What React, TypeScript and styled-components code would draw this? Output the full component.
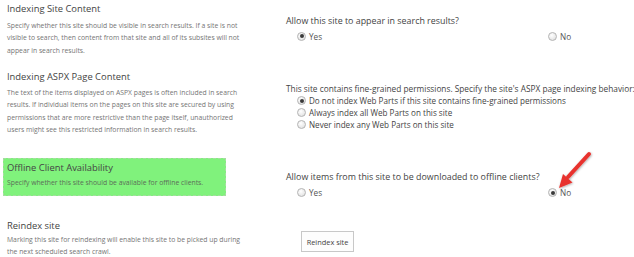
import React from "react";
import styled, { createGlobalStyle } from "styled-components";

const GlobalStyle = createGlobalStyle`
  html, body {
    margin: 0;
    padding: 0;
    background: #ffffff;
  }
  body {
    font-family: "Open Sans", "Noto Sans", sans-serif;
    width: 634px;
    height: 257px;
    overflow: hidden;
  }
`;

function Page() {
  return (
    <Wrapper>
      <Row top={2}>
        <Left>
          <Heading>Indexing Site Content</Heading>
          <Description gap={4.5}>
            Specify whether this site should be visible in search results. If a site is not
            <br />
            visible to search, then content from that site and all of its subsites will not
            <br />
            appear in search results.
          </Description>
        </Left>
        <Right pad={11.5}>
          <Question>Allow this site to appear in search results?</Question>
          <Choices>
            <Option>
              <Radio checked />
              Yes
            </Option>
            <Option>
              <Radio />
              No
            </Option>
          </Choices>
        </Right>
      </Row>

      <Row top={12.5}>
        <Left>
          <Heading>Indexing ASPX Page Content</Heading>
          <Description gap={4}>
            The text of the items displayed on ASPX pages is often included in search
            <br />
            results. If individual items on the pages on this site are secured by using
            <br />
            permissions that are more restrictive than the page itself, unauthorized
            <br />
            users might see this restricted information in search results.
          </Description>
        </Left>
        <Right pad={12}>
          <Question condensed>
            This site contains fine-grained permissions. Specify the site's ASPX page indexing behavior:
          </Question>
          <List>
            <ListItem>
              <Radio checked />
              Do not index Web Parts if this site contains fine-grained permissions
            </ListItem>
            <ListItem>
              <Radio />
              Always index all Web Parts on this site
            </ListItem>
            <ListItem>
              <Radio />
              Never index any Web Parts on this site
            </ListItem>
          </List>
        </Right>
      </Row>

      <Row top={21}>
        <Left>
          <Highlight>
            <Heading>Offline Client Availability</Heading>
            <Description gap={2.5}>
              Specify whether this site should be available for offline clients.
            </Description>
          </Highlight>
        </Left>
        <Right pad={12.5}>
          <Question>Allow items from this site to be downloaded to offline clients?</Question>
          <Choices>
            <Option>
              <Radio />
              Yes
            </Option>
            <Option>
              <Radio checked />
              No
            </Option>
          </Choices>
        </Right>
      </Row>

      <Row top={19.5}>
        <Left>
          <Heading>Reindex site</Heading>
          <Description gap={2}>
            Marking this site for reindexing will enable this site to be picked up during
            <br />
            the next scheduled search crawl.
          </Description>
        </Left>
        <Right pad={9}>
          <Button>Reindex site</Button>
        </Right>
      </Row>

      <Arrow width="44" height="46" viewBox="0 0 44 46">
        <defs>
          <filter id="shadow" x="-30%" y="-30%" width="160%" height="160%">
            <feDropShadow dx="0.6" dy="0.8" stdDeviation="0.8" floodColor="#000" floodOpacity="0.35" />
          </filter>
        </defs>
        <g filter="url(#shadow)">
          <line x1="36" y1="4" x2="15" y2="27" stroke="#e8322d" strokeWidth="4" strokeLinecap="round" />
          <polygon points="6,38 19.5,32.5 10,24" fill="#e8322d" />
        </g>
      </Arrow>
    </Wrapper>
  );
}

export default function App() {
  return (
    <>
      <GlobalStyle />
      <Page />
    </>
  );
}

const Wrapper = styled.div`
  position: relative;
  width: 634px;
  height: 257px;
  padding-left: 7px;
  box-sizing: border-box;
`;

const Row = styled.div<{ top: number }>`
  display: grid;
  grid-template-columns: 279px 1fr;
  margin-top: ${(p) => p.top}px;
`;

const Left = styled.div``;

const Right = styled.div<{ pad: number }>`
  padding-top: ${(p) => p.pad}px;
`;

const Heading = styled.div`
  font-size: 9.4px;
  line-height: 13px;
  color: #444444;
  white-space: nowrap;
`;

const Description = styled.div<{ gap: number }>`
  margin-top: ${(p) => p.gap}px;
  font-size: 6.8px;
  line-height: 12.5px;
  color: #757575;
  white-space: nowrap;
`;

const Highlight = styled.div`
  margin-left: -4px;
  width: 223px;
  box-sizing: border-box;
  padding: 2.5px 3px 5.5px 3px;
  background: #80f27c;
  border: 1px dashed #a6dca0;

  & > div:last-child {
    color: #5b6e58;
  }
`;

const Question = styled.div<{ condensed?: boolean }>`
  font-size: ${(p) => (p.condensed ? 8.3 : 8.9)}px;
  line-height: 13px;
  color: #444444;
  white-space: nowrap;
`;

const Choices = styled.div`
  display: grid;
  grid-template-columns: 251px auto;
  padding-left: 11px;
  margin-top: 3px;
`;

const Option = styled.label`
  display: flex;
  align-items: center;
  gap: 3px;
  font-size: 8.2px;
  line-height: 13px;
  color: #555555;
`;

const List = styled.div`
  padding-left: 11px;
`;

const ListItem = styled.label`
  display: flex;
  align-items: center;
  gap: 3px;
  font-size: 8.1px;
  line-height: 12px;
  color: #444444;
  white-space: nowrap;
`;

const Radio = styled.span<{ checked?: boolean }>`
  position: relative;
  display: inline-block;
  width: 7px;
  height: 7px;
  border-radius: 50%;
  border: 1px solid #b4b4b4;
  background: radial-gradient(circle at 40% 35%, #ffffff 0%, #e6e6e6 70%, #d4d4d4 100%);
  flex: none;

  &::after {
    content: "";
    display: ${(p) => (p.checked ? "block" : "none")};
    position: absolute;
    left: 1.5px;
    top: 1.5px;
    width: 4px;
    height: 4px;
    border-radius: 50%;
    background: #3a3a3a;
  }
`;

const Button = styled.button`
  margin-left: 15px;
  width: 53px;
  height: 21px;
  padding: 0;
  border: 1px solid #c8c8c8;
  background: #fdfdfd;
  font-family: "Open Sans", "Noto Sans", sans-serif;
  font-size: 7.4px;
  color: #444444;
`;

const Arrow = styled.svg`
  position: absolute;
  left: 553px;
  top: 148px;
`;
